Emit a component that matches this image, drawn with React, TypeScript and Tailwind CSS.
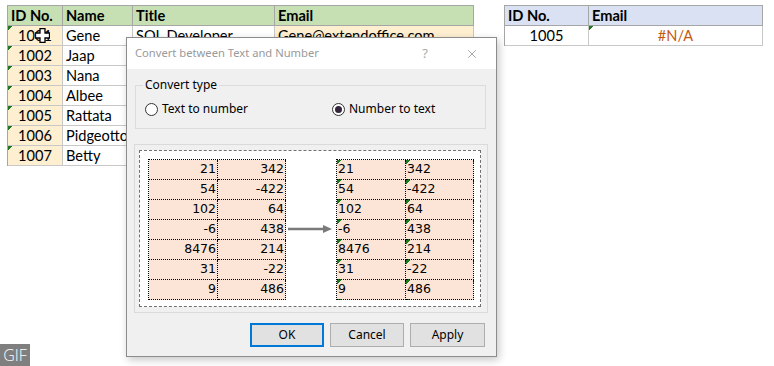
import { X } from 'lucide-react';

const people = [
  { id: '1001', name: 'Gene', title: 'SQL Developer', email: 'Gene@extendoffice.com' },
  { id: '1002', name: 'Jaap', title: '', email: '' },
  { id: '1003', name: 'Nana', title: '', email: '' },
  { id: '1004', name: 'Albee', title: '', email: '' },
  { id: '1005', name: 'Rattata', title: '', email: '' },
  { id: '1006', name: 'Pidgeotto', title: '', email: '' },
  { id: '1007', name: 'Betty', title: '', email: '' },
];

const pairs = [
  ['21', '342'],
  ['54', '-422'],
  ['102', '64'],
  ['-6', '438'],
  ['8476', '214'],
  ['31', '-22'],
  ['9', '486'],
];

function Radio({ checked, label }: { checked?: boolean; label: string }) {
  return (
    <label className="flex items-center gap-[4px]">
      <span className="w-[13px] h-[13px] rounded-full border border-[#333] bg-white flex items-center justify-center">
        {checked && <span className="w-[7px] h-[7px] rounded-full bg-[#33263a]" />}
      </span>
      <span>{label}</span>
    </label>
  );
}

export default function App() {
  const head = 'h-[20px] px-[3px] flex items-center border-r border-b border-[#a6a6a6] font-bold';
  const cell = 'h-[20px] px-[3px] flex items-center border-r border-b border-[#c8c8c8] whitespace-nowrap overflow-hidden';

  return (
    <div className="relative w-[774px] h-[366px] bg-white overflow-hidden text-black font-['Lato','Carlito',sans-serif] text-[14.6px]">
      {/* sheet */}
      <div className="flex pt-[5px] pl-[7px]">
        <div className="grid grid-cols-[55px_70px_142px_199px] border-l border-t border-[#a6a6a6]">
          <div className={`${head} bg-[#c6e0b4]`}>ID No.</div>
          <div className={`${head} bg-[#c6e0b4]`}>Name</div>
          <div className={`${head} bg-[#c6e0b4]`}>Title</div>
          <div className={`${head} bg-[#c6e0b4]`}>Email</div>
          {people.map((p) => (
            <div key={p.id} className="contents">
              <div className={`${cell} justify-center bg-[linear-gradient(135deg,#1c7a1c_3.5px,#fdefd0_3.5px)]`}>{p.id}</div>
              <div className={`${cell} bg-white`}>{p.name}</div>
              <div className={`${cell} bg-white`}>{p.title}</div>
              <div className={`${cell} bg-[#fdefd0]`}>{p.email}</div>
            </div>
          ))}
        </div>

        <div className="ml-[30px] grid grid-cols-[84px_174px] border-l border-t border-[#a6a6a6] self-start">
          <div className={`${head} bg-[#d9e1f2]`}>ID No.</div>
          <div className={`${head} bg-[#d9e1f2]`}>Email</div>
          <div className={`${cell} justify-center border-[#a6a6a6]`}>1005</div>
          <div className={`${cell} justify-center border-[#a6a6a6] text-[#c65911] bg-[linear-gradient(135deg,#1c7a1c_3.5px,#ffffff_3.5px)]`}>#N/A</div>
        </div>
      </div>

      {/* cell cursor */}
      <svg className="absolute left-[35px] top-[28px]" width="15" height="15" viewBox="0 0 15 15">
        <path d="M5 0.5h5v4.5h4.5v5h-4.5v4.5h-5v-4.5h-4.5v-5h4.5z" fill="#fff" stroke="#000" strokeWidth="1.3" />
      </svg>

      {/* dialog */}
      <div className="absolute left-[126px] top-[37px] w-[371px] h-[320px] bg-[#f0f0f0] border border-[#8c8c8c] shadow-[2px_3px_8px_rgba(0,0,0,0.22)] text-[12px] font-['Segoe_UI','Noto_Sans',sans-serif] text-black">
        <div className="h-[31px] bg-white flex items-center pl-[8px] pr-[17px] text-[#9a9a9a] text-[11.2px]">
          <span>Convert between Text and Number</span>
          <span className="ml-auto mr-[37px] text-[13px] text-[#aaa]">?</span>
          <X size={14} strokeWidth={1.1} className="text-[#777]" />
        </div>

        <fieldset className="mt-[8px] ml-[8px] w-[351px] h-[52px] border border-[#dcdcdc] px-[9px]">
          <legend className="px-[2px] ml-[-2px] leading-[16px]">Convert type</legend>
          <div className="flex items-center mt-[7px]">
            <div className="w-[187px]">
              <Radio label="Text to number" />
            </div>
            <Radio checked label="Number to text" />
          </div>
        </fieldset>

        <div className="mt-[15px] ml-[7px] w-[354px] h-[169px] border border-[#dadada] pt-[5px] pl-[4px]">
          <div className="w-[342px] h-[157px] bg-white border border-dashed border-[#707070] pt-[8px] pl-[8px] flex font-['DejaVu_Sans',sans-serif] text-[12.5px]">
            <div className="grid grid-cols-[69px_68px] border-t border-l border-dotted border-black self-start">
              {pairs.map(([a, b], i) => (
                <div key={i} className="contents">
                  <div className="h-[20px] bg-[#fce4d6] border-r border-b border-dotted border-black flex items-center justify-end pr-[1px]">{a}</div>
                  <div className="h-[20px] bg-[#fce4d6] border-r border-b border-dotted border-black flex items-center justify-end pr-[1px]">{b}</div>
                </div>
              ))}
            </div>
            <div className="w-[50px] h-[140px] flex items-center">
              <svg width="50" height="10" viewBox="0 0 50 10">
                <line x1="2" y1="5" x2="40" y2="5" stroke="#7a7a7a" strokeWidth="2.5" />
                <polygon points="37,1 46,5 37,9" fill="#7a7a7a" />
              </svg>
            </div>
            <div className="grid grid-cols-[69px_68px] border-t border-l border-dotted border-black self-start">
              {pairs.map(([a, b], i) => (
                <div key={i} className="contents">
                  <div className="h-[20px] bg-[linear-gradient(135deg,#1c7a1c_3.5px,#fce4d6_3.5px)] border-r border-b border-dotted border-black flex items-center pl-[1px]">{a}</div>
                  <div className="h-[20px] bg-[linear-gradient(135deg,#1c7a1c_3.5px,#fce4d6_3.5px)] border-r border-b border-dotted border-black flex items-center pl-[1px]">{b}</div>
                </div>
              ))}
            </div>
          </div>
        </div>

        <div className="mt-[10px] pr-[11px] flex justify-end gap-[6px]">
          <button className="w-[74px] h-[24px] bg-[#e1e1e1] border-2 border-[#0078d7]">OK</button>
          <button className="w-[74px] h-[24px] bg-[#e1e1e1] border border-[#adadad]">Cancel</button>
          <button className="w-[75px] h-[24px] bg-[#e1e1e1] border border-[#adadad]">Apply</button>
        </div>
      </div>

      {/* gif badge */}
      <div className="absolute left-0 bottom-0 w-[30px] h-[22px] bg-[#7f7f7f] text-white flex items-center justify-center text-[16px] font-light font-['Open_Sans',sans-serif]">
        GIF
      </div>
    </div>
  );
}
